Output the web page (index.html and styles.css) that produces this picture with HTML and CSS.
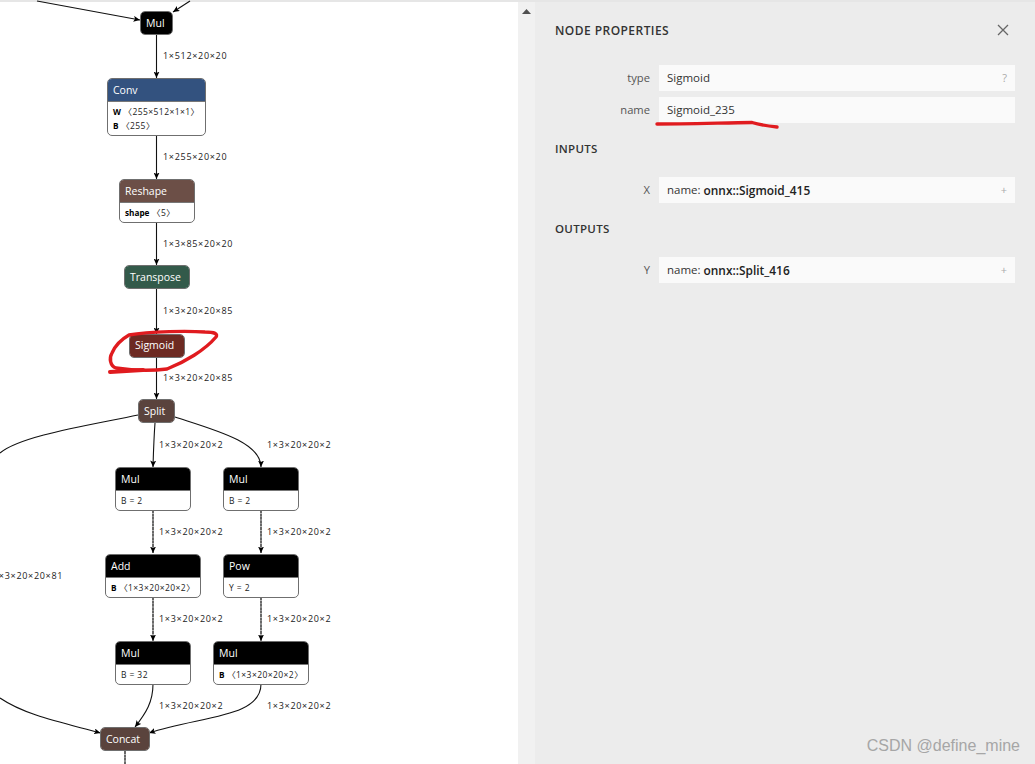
FILE: index.html
```html
<!DOCTYPE html>
<html lang="en">
<head>
<meta charset="utf-8">
<title>Node properties</title>
<link rel="stylesheet" href="styles.css">
</head>
<body>
<div class="page">
  <main class="canvas">
    <svg class="edges" width="518" height="764" viewBox="0 0 518 764">
      <defs>
        <marker id="arrow" markerWidth="7" markerHeight="6" refX="6.5" refY="3" orient="auto" markerUnits="userSpaceOnUse">
          <path d="M0 0 L6.5 3 L0 6 L1.5 3 Z" fill="#000"/>
        </marker>
      </defs>
      <g class="edge-lines">
        <path marker-end="url(#arrow)" d="M37 1 L140 20"/>
        <path marker-end="url(#arrow)" d="M190 1 L173 12"/>
        <path marker-end="url(#arrow)" d="M156.5 34 V78"/>
        <path marker-end="url(#arrow)" d="M156.5 135 V179"/>
        <path marker-end="url(#arrow)" d="M156.5 222 V265"/>
        <path marker-end="url(#arrow)" d="M156.5 289 V334"/>
        <path marker-end="url(#arrow)" d="M156.5 357 V399"/>
        <path d="M138 415 C85 426 20 436 0 453"/>
        <path marker-end="url(#arrow)" d="M155 423 C154 436 153.5 450 153 467"/>
        <path marker-end="url(#arrow)" d="M175 417 C215 430 261 442 261 467"/>
        <path class="dense" marker-end="url(#arrow)" d="M153 510 V553"/>
        <path class="dense" marker-end="url(#arrow)" d="M261 510 V553"/>
        <path class="dense" marker-end="url(#arrow)" d="M153 597 V641"/>
        <path class="dense" marker-end="url(#arrow)" d="M261 597 V641"/>
        <path marker-end="url(#arrow)" d="M153 684 C153 702 146 713 135 727"/>
        <path marker-end="url(#arrow)" d="M261 684 C261 718 200 716 149 733"/>
        <path marker-end="url(#arrow)" d="M0 698 C25 715 60 722 100.5 733"/>
        <path class="dense" d="M125 751 V764"/>
      </g>
      <g class="edge-labels">
        <text x="163" y="59">1×512×20×20</text>
        <text x="163" y="160">1×255×20×20</text>
        <text x="163" y="247">1×3×85×20×20</text>
        <text x="163" y="314">1×3×20×20×85</text>
        <text x="163" y="381">1×3×20×20×85</text>
        <text x="159" y="448">1×3×20×20×2</text>
        <text x="267" y="448">1×3×20×20×2</text>
        <text x="159" y="535">1×3×20×20×2</text>
        <text x="267" y="535">1×3×20×20×2</text>
        <text x="159" y="622">1×3×20×20×2</text>
        <text x="267" y="622">1×3×20×20×2</text>
        <text x="159" y="709">1×3×20×20×2</text>
        <text x="267" y="709">1×3×20×20×2</text>
        <text x="-7" y="579">1×3×20×20×81</text>
      </g>
    </svg>

    <div class="node n-mul-top op-black"><div class="head">Mul</div></div>
    <div class="node n-conv op-blue"><div class="head">Conv</div><div class="attrs"><div><b>W</b> <span class="dims">〈255×512×1×1〉</span></div><div><b>B</b> <span class="dims">〈255〉</span></div></div></div>
    <div class="node n-reshape op-brown"><div class="head">Reshape</div><div class="attrs"><div><b>shape</b> <span class="dims">〈5〉</span></div></div></div>
    <div class="node n-transpose op-green"><div class="head">Transpose</div></div>
    <div class="node n-sigmoid op-red"><div class="head">Sigmoid</div></div>
    <div class="node n-split op-umber"><div class="head">Split</div></div>
    <div class="node n-mul-a op-black"><div class="head">Mul</div><div class="attrs"><div>B = 2</div></div></div>
    <div class="node n-mul-b op-black"><div class="head">Mul</div><div class="attrs"><div>B = 2</div></div></div>
    <div class="node n-add op-black"><div class="head">Add</div><div class="attrs"><div><b>B</b> <span class="dims">〈1×3×20×20×2〉</span></div></div></div>
    <div class="node n-pow op-black"><div class="head">Pow</div><div class="attrs"><div>Y = 2</div></div></div>
    <div class="node n-mul-c op-black"><div class="head">Mul</div><div class="attrs"><div>B = 32</div></div></div>
    <div class="node n-mul-d op-black"><div class="head">Mul</div><div class="attrs"><div><b>B</b> <span class="dims">〈1×3×20×20×2〉</span></div></div></div>
    <div class="node n-concat op-umber"><div class="head">Concat</div></div>
  </main>

  <div class="scrollbar">
    <svg class="scroll-up" width="9" height="5" viewBox="0 0 9 5"><path d="M4.5 0 L9 5 H0 Z"/></svg>
  </div>

  <aside class="panel">
    <header class="panel-head">
      <h1>NODE PROPERTIES</h1>
      <svg class="close" width="12" height="12" viewBox="0 0 12 12"><path d="M1 1 L11 11 M11 1 L1 11"/></svg>
    </header>
    <div class="rows first">
      <div class="row"><span class="key">type</span><div class="val">Sigmoid<span class="action">?</span></div></div>
      <div class="row"><span class="key">name</span><div class="val">Sigmoid_235</div></div>
    </div>
    <h2>INPUTS</h2>
    <div class="rows">
      <div class="row"><span class="key">X</span><div class="val">name: <b>onnx::Sigmoid_415</b><span class="action">+</span></div></div>
    </div>
    <h2>OUTPUTS</h2>
    <div class="rows">
      <div class="row"><span class="key">Y</span><div class="val">name: <b>onnx::Split_416</b><span class="action">+</span></div></div>
    </div>
  </aside>
</div>

<svg class="scribbles" width="1035" height="764" viewBox="0 0 1035 764">
  <path d="M129 335 C150 331 190 331 205 332 C215 332 218 334 216 337 C205 350 185 362 167 369 C150 371 130 370 116 368 C110 366 109 358 112 353 C115 346 122 339 129 335"/>
  <path class="thick" d="M110 372 L143 370"/>
  <path d="M657 124 C680 124 720 123 752 122.5 C760 125 768 126 777 127"/>
</svg>
<div class="watermark">CSDN @define_mine</div>
</body>
</html>
```

FILE: styles.css
```css
* { box-sizing: border-box; }
html, body { margin: 0; padding: 0; }
body {
  width: 1035px;
  height: 764px;
  overflow: hidden;
  position: relative;
  background: #fff;
  font-family: "Open Sans", "Noto Sans CJK SC", sans-serif;
  color: #222;
}
.page {
  display: flex;
  width: 1035px;
  height: 764px;
  border-top: 2px solid #e6e6e6;
}
.canvas {
  position: relative;
  width: 518px;
  flex: none;
  margin-top: -2px;
  overflow: hidden;
}
.edges { position: absolute; left: 0; top: 0; }
.edge-lines path { fill: none; stroke: #111; stroke-width: 1.1; }
.edge-lines path.dense { stroke: #2a2a2a; stroke-width: 1.4; stroke-dasharray: 3 .4; }
.edge-labels text { font-size: 9px; fill: #222; letter-spacing: .7px; }

.node {
  position: absolute;
  border: 1px solid #6f6f6f;
  border-radius: 5px;
  overflow: hidden;
  background: #fff;
}
.head {
  height: 22px;
  line-height: 23px;
  font-size: 10.5px;
  color: #fff;
  padding-left: 5px;
}
.attrs {
  border-top: 1px solid #777;
  padding: 3px 5px 0;
  font-size: 8.5px;
  line-height: 14px;
  color: #222;
  letter-spacing: .4px;
  white-space: nowrap;
}
.attrs b { color: #000; font-size: 8.2px; letter-spacing: 0; }
.dims { letter-spacing: .42px; }
.op-black .head { background: #000; }
.op-blue .head { background: #33527f; }
.op-brown .head { background: #6c4f47; }
.op-green .head { background: #335a4a; }
.op-red .head { background: #6d2a22; }
.op-umber .head { background: #5a433d; }

.n-mul-top { left: 140px; top: 11px; width: 33px; }
.n-conv { left: 107px; top: 78px; width: 99px; height: 58px; }
.n-reshape { left: 119px; top: 179px; width: 76px; height: 44px; }
.n-transpose { left: 124px; top: 265px; width: 66px; }
.n-sigmoid { left: 129px; top: 334px; width: 56px; }
.n-sigmoid .head { line-height: 21px; }
.n-split { left: 138px; top: 399px; width: 37px; }
.n-mul-a { left: 115px; top: 467px; width: 76px; height: 44px; }
.n-mul-b { left: 223px; top: 467px; width: 76px; height: 44px; }
.n-add { left: 105px; top: 554px; width: 96px; height: 44px; }
.n-pow { left: 223px; top: 554px; width: 76px; height: 44px; }
.n-mul-c { left: 115px; top: 641px; width: 76px; height: 44px; }
.n-mul-d { left: 213px; top: 641px; width: 96px; height: 44px; }
.n-concat { left: 100px; top: 727px; width: 50px; }

.scrollbar {
  width: 17px;
  flex: none;
  background: #f1f1f1;
  display: flex;
  justify-content: center;
  align-items: flex-start;
  padding-top: 7px;
}
.scroll-up { fill: #505050; display: block; }

.panel {
  flex: 1;
  background: #ececec;
  padding: 0 20px;
}
.panel-head {
  display: flex;
  justify-content: space-between;
  align-items: center;
  height: 56px;
  padding-right: 6px;
}
.panel-head h1, .panel h2 {
  margin: 0;
  font-size: 11.5px;
  font-weight: 600;
  color: #333;
  letter-spacing: .3px;
}
.panel-head h1 { font-size: 12px; letter-spacing: .45px; }
.close { fill: none; stroke: #666; stroke-width: 1.3; display: block; }
.rows { display: flex; flex-direction: column; gap: 6px; }
.rows.first { margin-top: 7px; }
.panel h2 { line-height: 16px; margin: 18px 0 20px; }
.row { display: flex; align-items: center; height: 26px; }
.key {
  width: 95px;
  flex: none;
  text-align: right;
  font-size: 11.2px;
  color: #555;
  margin-right: 9px;
  padding-bottom: 2px;
}
.val {
  flex: 1;
  height: 26px;
  line-height: 26px;
  background: #fafafa;
  padding-left: 8px;
  font-size: 11.5px;
  color: #333;
  display: flex;
  white-space: pre;
}
.val b { font-weight: 600; color: #222; font-size: 11.9px; }
.action { margin-left: auto; margin-right: 8px; font-size: 11px; color: #aaa; }

.scribbles {
  position: absolute;
  left: 0;
  top: 0;
  pointer-events: none;
  fill: none;
  stroke: #e01b1f;
  stroke-width: 3.4;
  stroke-linecap: round;
}
.scribbles .thick { stroke-width: 4; }
.watermark {
  position: absolute;
  right: 15px;
  top: 737px;
  font-family: "Liberation Sans", sans-serif;
  font-size: 16px;
  line-height: 18px;
  color: #a6a6a6;
}
```
